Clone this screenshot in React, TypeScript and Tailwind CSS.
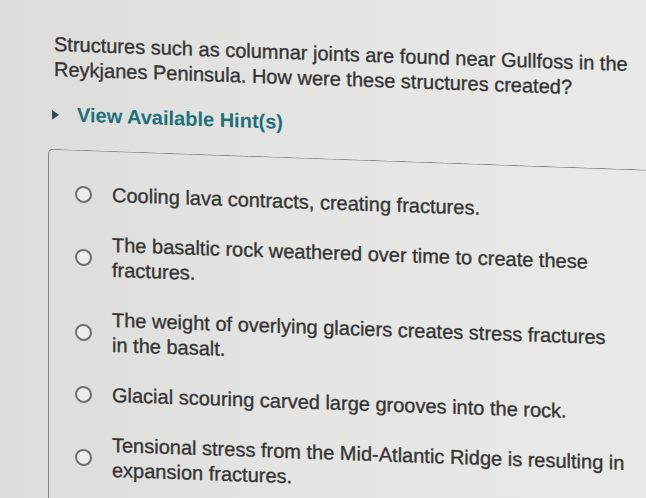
import React from 'react';

// Answer choices, kept as the lines they wrap to on screen
const choices: string[][] = [
  ['Cooling lava contracts, creating fractures.'],
  ['The basaltic rock weathered over time to create these', 'fractures.'],
  ['The weight of overlying glaciers creates stress fractures', 'in the basalt.'],
  ['Glacial scouring carved large grooves into the rock.'],
  ['Tensional stress from the Mid-Atlantic Ridge is resulting in', 'expansion fractures.'],
];

const Choice: React.FC<{ lines: string[] }> = ({ lines }) => (
  <label className="flex cursor-pointer items-center">
    <span className="h-[17px] w-[17px] shrink-0 rounded-full border-[2px] border-[#6e6e6e] bg-[#ededec]" />
    <span className="ml-[20px] text-[20px] leading-[25px] text-[#353535] [-webkit-text-stroke:0.35px_#353535]">
      {lines.map((line, i) => (
        <React.Fragment key={i}>
          {i > 0 && <br />}
          {line}
        </React.Fragment>
      ))}
    </span>
  </label>
);

export default function App() {
  return (
    <div
      className="h-[498px] w-full overflow-hidden bg-gradient-to-r from-[#dcdcda] via-[#e5e5e3] to-[#e9e9e7]"
      style={{ fontFamily: '"Liberation Sans", Arial, sans-serif' }}
    >
      <div className="origin-top-left skew-y-[2deg] pt-[30px]">
        <p className="ml-[54px] text-[20px] leading-[25px] text-[#353535] [-webkit-text-stroke:0.35px_#353535]">
          Structures such as columnar joints are found near Gullfoss in the
          <br />
          Reykjanes Peninsula. How were these structures created?
        </p>

        <button className="ml-[52px] mt-[20px] flex items-center">
          <svg width="7" height="10" viewBox="0 0 7 10" className="shrink-0">
            <path d="M0 0 L7 5 L0 10 Z" fill="#2f4c52" />
          </svg>
          <span className="ml-[18px] text-[20px] font-bold leading-[25px] text-[#21717b]">
            View Available Hint(s)
          </span>
        </button>

        <div className="ml-[48px] mt-[22px] rounded-tl-[5px] border-l border-t border-[#858585] pb-[60px] pl-[26px] pt-[31px]">
          <div className="flex flex-col gap-[25px]">
            {choices.map((lines, i) => (
              <Choice key={i} lines={lines} />
            ))}
          </div>
        </div>
      </div>
    </div>
  );
}
